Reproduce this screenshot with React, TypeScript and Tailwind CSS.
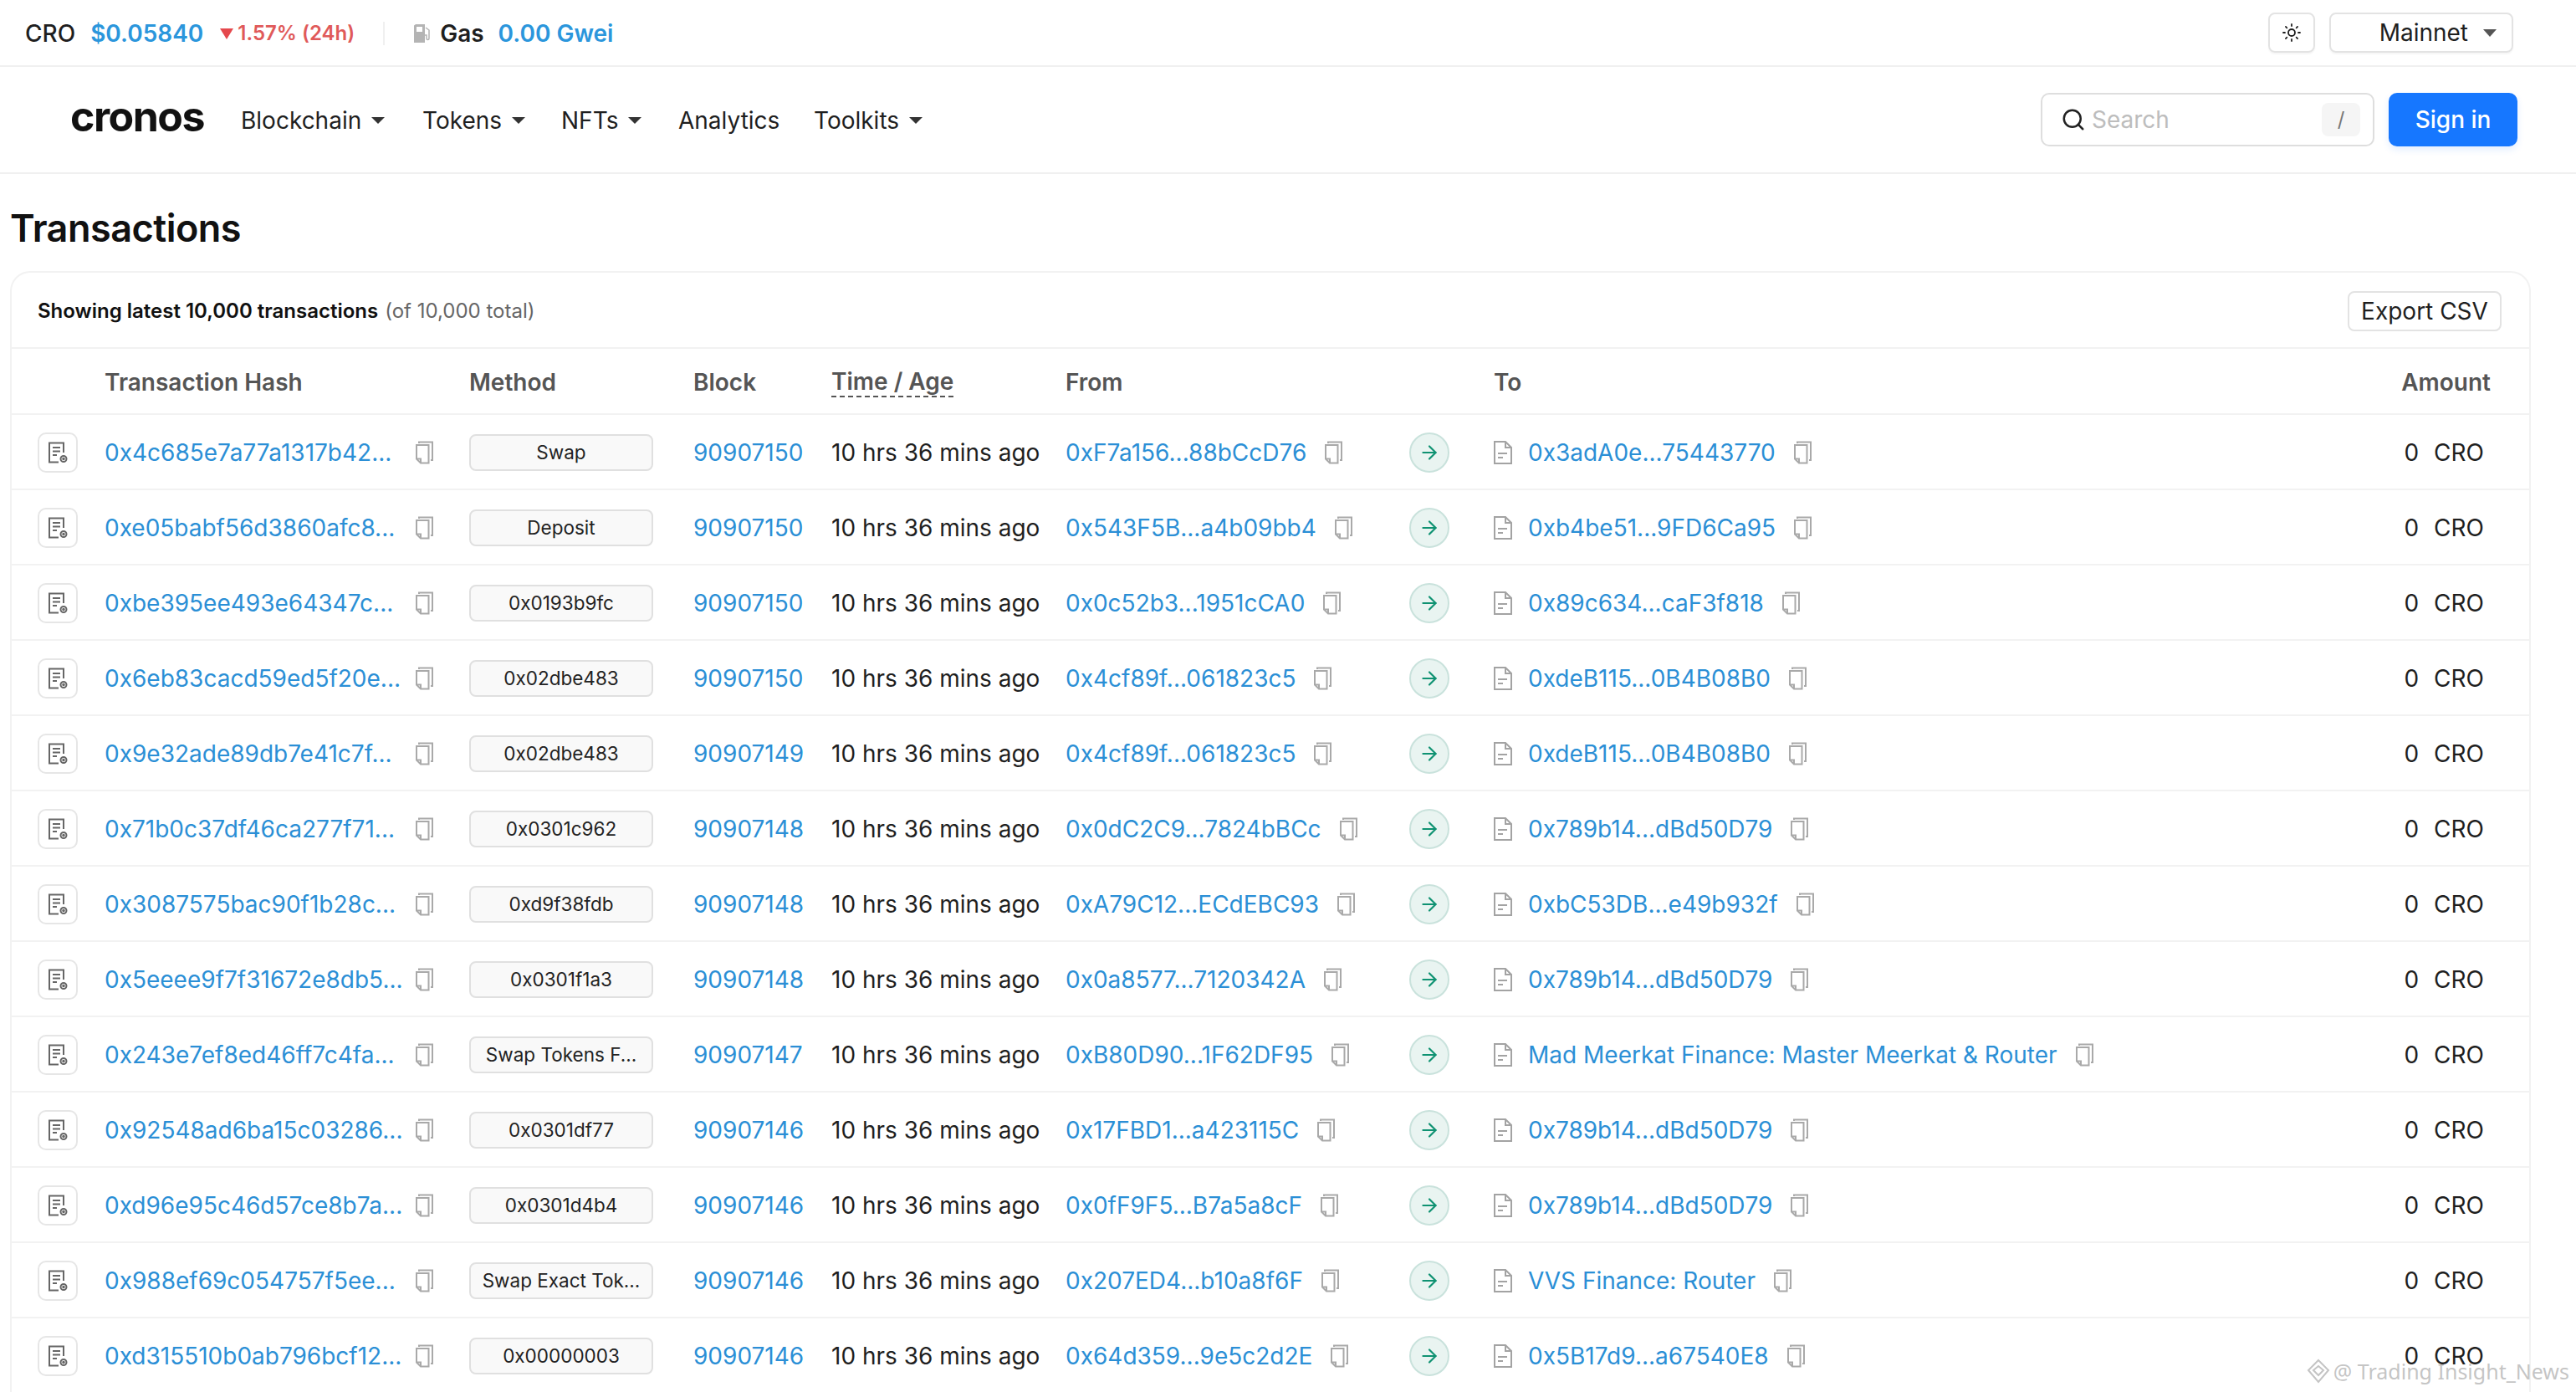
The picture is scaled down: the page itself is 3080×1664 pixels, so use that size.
import { ArrowRight, Search, Sun } from "lucide-react";

const rows: [string, string, string, string, string, boolean?][] = [
  ["0x4c685e7a77a1317b42...", "Swap", "90907150", "0xF7a156...88bCcD76", "0x3adA0e...75443770"],
  ["0xe05babf56d3860afc8...", "Deposit", "90907150", "0x543F5B...a4b09bb4", "0xb4be51...9FD6Ca95"],
  ["0xbe395ee493e64347c...", "0x0193b9fc", "90907150", "0x0c52b3...1951cCA0", "0x89c634...caF3f818"],
  ["0x6eb83cacd59ed5f20e...", "0x02dbe483", "90907150", "0x4cf89f...061823c5", "0xdeB115...0B4B08B0"],
  ["0x9e32ade89db7e41c7f...", "0x02dbe483", "90907149", "0x4cf89f...061823c5", "0xdeB115...0B4B08B0"],
  ["0x71b0c37df46ca277f71...", "0x0301c962", "90907148", "0x0dC2C9...7824bBCc", "0x789b14...dBd50D79"],
  ["0x3087575bac90f1b28c...", "0xd9f38fdb", "90907148", "0xA79C12...ECdEBC93", "0xbC53DB...e49b932f"],
  ["0x5eeee9f7f31672e8db5...", "0x0301f1a3", "90907148", "0x0a8577...7120342A", "0x789b14...dBd50D79"],
  ["0x243e7ef8ed46ff7c4fa...", "Swap Tokens F...", "90907147", "0xB80D90...1F62DF95", "Mad Meerkat Finance: Master Meerkat & Router"],
  ["0x92548ad6ba15c03286...", "0x0301df77", "90907146", "0x17FBD1...a423115C", "0x789b14...dBd50D79"],
  ["0xd96e95c46d57ce8b7a...", "0x0301d4b4", "90907146", "0x0fF9F5...B7a5a8cF", "0x789b14...dBd50D79"],
  ["0x988ef69c054757f5ee...", "Swap Exact Tok...", "90907146", "0x207ED4...b10a8f6F", "VVS Finance: Router"],
  ["0xd315510b0ab796bcf12...", "0x00000003", "90907146", "0x64d359...9e5c2d2E", "0x5B17d9...a67540E8"],
];

const cols =
  "grid grid-cols-[80px_371px_65px_268px_165px_280px_411px_48px_53px_1fr] items-center pl-[31px] pt-[2px]";

function CopyIcon() {
  return (
    <svg width="22" height="28" viewBox="0 0 22 28" fill="none" stroke="#a9a9a9" strokeWidth="2" className="shrink-0">
      <path d="M5 3V1.500h16V23h-2" />
      <path d="M2 5h14.500v21.500H7L2 21.500z" />
      <path d="M2 21.500h5v5" />
    </svg>
  );
}

function FileIcon() {
  return (
    <svg width="22" height="28" viewBox="0 0 22 28" fill="none" stroke="#a3a3a3" strokeWidth="2" className="shrink-0">
      <path d="M1 1h13l7 7v19H1z" />
      <path d="M14 1v7h7M5 15h11M5 20h6" />
    </svg>
  );
}

function TxIcon() {
  return (
    <div className="flex h-12 w-12 items-center justify-center rounded-[10px] border-2 border-[#e6e6e6] bg-white">
      <svg width="24" height="26" viewBox="0 0 24 26" fill="none" stroke="#666" strokeWidth="2">
        <path d="M13 24.500H2V1.500h17V13" />
        <path d="M6 7h9M6 11.500h9M6 16h5" />
        <circle cx="19" cy="20.500" r="3.500" />
        <circle cx="19" cy="20.500" r="0.800" fill="#666" />
      </svg>
    </div>
  );
}

function Caret({ big }: { big?: boolean }) {
  return (
    <span
      className={
        big
          ? "h-0 w-0 border-x-[8px] border-t-[9px] border-x-transparent border-t-[#555]"
          : "h-0 w-0 border-x-[8px] border-t-[8px] border-x-transparent border-t-[#333]"
      }
    />
  );
}

function NavItem({ label, caret = true, className }: { label: string; caret?: boolean; className: string }) {
  return (
    <div className={"flex items-center gap-3 " + className}>
      <span>{label}</span>
      {caret && <Caret />}
    </div>
  );
}

function GasIcon() {
  return (
    <svg width="22" height="24" viewBox="0 0 22 24">
      <path d="M1 2.500 3 1h11v22H1z" fill="#b4b4b4" />
      <path d="M4 4h7v6H4z" fill="#fff" />
      <path d="M15 5l4 3v10c0 2-3 2-3 0v-4h-2" fill="none" stroke="#b4b4b4" strokeWidth="1.500" />
    </svg>
  );
}

export default function App() {
  return (
    <div className="relative h-screen overflow-hidden bg-white font-['Inter',sans-serif] text-[28px] text-[#1f1f1f]">
      <header className="flex h-20 items-center justify-between border-b-2 border-[#f0f0f0] pl-[30px] pr-[75px]">
        <div className="mt-[2px] flex items-center font-medium">
          <span>CRO</span>
          <span className="ml-[18px] font-semibold text-[#2b96dc]">$0.05840</span>
          <span className="ml-5 h-0 w-0 border-x-[8px] border-t-[13px] border-x-transparent border-t-[#e5484d]" />
          <span className="ml-[5px] text-[24px] font-semibold text-[#e05a5a]">1.57% (24h)</span>
          <span className="ml-[34px] h-7 w-0.5 bg-[#f0f0f0]" />
          <span className="ml-[34px] flex"><GasIcon /></span>
          <span className="ml-[10px] font-semibold">Gas</span>
          <span className="ml-[17px] font-semibold text-[#2b96dc]">0.00 Gwei</span>
        </div>
        <div className="flex items-center gap-[17px]">
          <div className="flex h-12 w-14 items-center justify-center rounded-lg border-2 border-[#e3e3e3] shadow-[0_2px_2px_rgba(0,0,0,0.04)]">
            <Sun size={24} strokeWidth={1.800} color="#1f1f1f" />
          </div>
          <div className="flex h-12 w-[220px] items-center justify-end gap-[18px] rounded-lg border-2 border-[#e3e3e3] pr-[18px] shadow-[0_2px_2px_rgba(0,0,0,0.04)]">
            <span>Mainnet</span>
            <Caret big />
          </div>
        </div>
      </header>

      <nav className="flex h-[128px] items-center justify-between border-b-2 border-[#f0f0f0] pl-[84px] pr-[70px]">
        <div className="mt-[2px] flex items-center">
          <span className="mt-[-10px] w-[204px] text-[50px] leading-none font-bold tracking-[-1.500px] text-[#111]">cronos</span>
          <NavItem label="Blockchain" className="w-[217px]" />
          <NavItem label="Tokens" className="w-[166px]" />
          <NavItem label="NFTs" className="w-[140px]" />
          <NavItem label="Analytics" caret={false} className="w-[162px]" />
          <NavItem label="Toolkits" className="" />
        </div>
        <div className="flex items-center gap-[17px]">
          <div className="flex h-[64px] w-[399px] items-center rounded-[10px] border-2 border-[#dedede] pl-[22px] pr-[15px]">
            <Search size={30} strokeWidth={2} color="#222" />
            <span className="ml-[7px] flex-1 text-[#bdbdbd]">Search</span>
            <span className="flex h-10 w-[46px] items-center justify-center rounded-lg bg-[#f5f5f5] text-[24px] text-[#777]">/</span>
          </div>
          <div className="flex h-16 w-[154px] items-center justify-center rounded-[10px] bg-[#1677ff] font-medium text-white shadow-[0_4px_8px_rgba(22,119,255,0.12)]">
            Sign in
          </div>
        </div>
      </nav>

      <h1 className="mt-[40px] ml-3 text-[45px] leading-[50px] font-semibold tracking-[-0.5px] text-[#111]">Transactions</h1>

      <section className="mt-[26px] ml-3 w-[3014px] rounded-t-[24px] border-2 border-b-0 border-[#f2f2f2] bg-white">
        <div className="flex h-[91px] items-center justify-between border-b-2 border-[#f2f2f2] pt-[2px] pr-[33px] pl-[31px]">
          <div className="text-[24px]">
            <span className="font-semibold text-[#111]">Showing latest 10,000 transactions</span>
            <span className="ml-2 text-[#666]">(of 10,000 total)</span>
          </div>
          <div className="flex h-12 w-[184px] items-center justify-center rounded-lg border-2 border-[#e3e3e3]">Export CSV</div>
        </div>

        <div className={cols + " h-[79px] border-b-2 border-[#f2f2f2] font-semibold text-[#555]"}>
          <span />
          <span className="col-span-2">Transaction Hash</span>
          <span>Method</span>
          <span>Block</span>
          <span className="w-fit border-b-2 border-dashed border-[#555] leading-[34px]">Time / Age</span>
          <span>From</span>
          <span />
          <span />
          <div className="flex justify-between pr-[46px]">
            <span>To</span>
            <span>Amount</span>
          </div>
        </div>

        {rows.map(([hash, method, block, from, to]) => (
          <div key={hash} className={cols + " h-[90px] border-b-2 border-[#f2f2f2]"}>
            <TxIcon />
            <span className="text-[#2b8fd6]">{hash}</span>
            <CopyIcon />
            <span className="flex h-11 w-[220px] items-center justify-center rounded-lg border-2 border-[#e0e0e0] bg-[#f9f9f9] text-[22.5px] text-[#222]">
              {method}
            </span>
            <span className="text-[#2b8fd6]">{block}</span>
            <span>10 hrs 36 mins ago</span>
            <div className="flex items-center gap-[21px]">
              <span className="text-[#2b8fd6]">{from}</span>
              <CopyIcon />
            </div>
            <span className="flex h-12 w-12 items-center justify-center rounded-full border-2 border-[#c9e2dc] bg-[#e9f4f1]">
              <ArrowRight size={26} strokeWidth={2} color="#0f9272" />
            </span>
            <span />
            <div className="flex items-center justify-between pr-[54px]">
              <div className="flex items-center">
                <FileIcon />
                <span className="ml-[19px] text-[#2b8fd6]">{to}</span>
                <span className="ml-[21px] flex"><CopyIcon /></span>
              </div>
              <div className="flex gap-[18px]">
                <span>0</span>
                <span>CRO</span>
              </div>
            </div>
          </div>
        ))}
      </section>

      <div className="absolute right-[8px] bottom-[10px] flex items-center gap-1 font-['Noto_Sans',sans-serif] text-[25px] leading-none text-[#b5b5b5]/80">
        <svg width="28" height="30" viewBox="0 0 28 30" fill="none" stroke="#c4c4c4" strokeWidth="2">
          <path d="M14 2 26 14 14 28 2 14z" />
          <path d="M8 14l6-5 6 5-6 6z" />
        </svg>
        <span>@ Trading Insight_News</span>
      </div>
    </div>
  );
}
